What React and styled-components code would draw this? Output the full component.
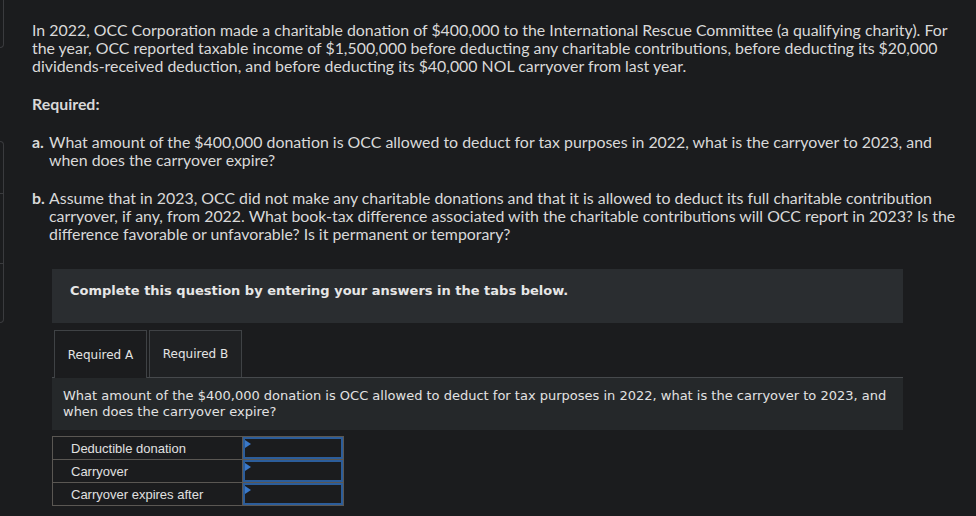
import React from "react";
import styled, { createGlobalStyle } from "styled-components";

const Global = createGlobalStyle`
  html, body { margin: 0; padding: 0; background: #1b1c1e; }
  body { width: 976px; height: 516px; overflow: hidden; }
`;

const Page = styled.div`
  display: flex;
  width: 976px;
  height: 516px;
  background: #1b1c1e;
  color: #d9d9d9;
  font-family: "Lato", "Open Sans", sans-serif;
  overflow: hidden;
`;

const Rail = styled.div`
  width: 4px;
  flex: none;
  display: flex;
  flex-direction: column;
`;

const RailBox = styled.div`
  margin-top: ${(p) => p.$top}px;
  height: ${(p) => p.$h}px;
  border: 1px solid #3a3b3e;
  border-left: none;
  border-radius: 0 ${(p) => (p.$rt ? 4 : 0)}px ${(p) => (p.$rb ? 4 : 0)}px 0;
  box-sizing: border-box;
`;

const Main = styled.div`
  flex: 1;
  padding: 21px 0 0 28px;
`;

const Para = styled.p`
  margin: 0;
  width: 923px;
  font-size: 15.9px;
  line-height: 18px;
`;

const Required = styled.p`
  margin: 20px 0 0;
  font-size: 15.9px;
  font-weight: 700;
  line-height: 18px;
`;

const List = styled.div`
  margin-top: 20px;
  display: flex;
  flex-direction: column;
  gap: 20px;
`;

const Item = styled.div`
  display: flex;
  font-size: 15.9px;
  line-height: 18px;
`;

const Marker = styled.span`
  width: 17px;
  flex: none;
  font-weight: 700;
`;

const ItemText = styled.span`
  width: 910px;
`;

const Panel = styled.div`
  margin: 26px 0 0 20px;
  width: 851px;
`;

const Banner = styled.div`
  height: 54px;
  background: #2a2d30;
  box-sizing: border-box;
  padding: 14px 18px 0;
  font-family: "DejaVu Sans", Verdana, sans-serif;
  font-weight: 700;
  font-size: 13px;
  line-height: 16px;
  color: #e6e6e6;
`;

const Tabs = styled.div`
  margin-top: 7px;
  display: flex;
  gap: 2px;
  padding-left: 2px;
  border-bottom: 1px solid #46494c;
`;

const Tab = styled.div`
  width: 93px;
  box-sizing: border-box;
  border: 1px solid #3f4245;
  border-bottom: none;
  background: ${(p) => (p.$active ? "#1b1c1e" : "#1f2123")};
  display: flex;
  align-items: center;
  justify-content: center;
  font-family: "DejaVu Sans", Verdana, sans-serif;
  font-size: 12px;
  color: #e4e4e4;
  margin-bottom: ${(p) => (p.$active ? "-1px" : "0")};
  height: ${(p) => (p.$active ? "48px" : "47px")};
`;

const Question = styled.div`
  background: #25282a;
  height: 52px;
  box-sizing: border-box;
  padding: 10px 6px 0 11px;
  font-family: "DejaVu Sans", Verdana, sans-serif;
  font-size: 13px;
  line-height: 16px;
  color: #e2e2e2;
`;

const Table = styled.table`
  margin-top: 6px;
  border-collapse: collapse;
  font-family: "Liberation Sans", Arial, sans-serif;
  font-size: 13px;
  color: #e0e0e0;
`;

const Label = styled.td`
  width: 190px;
  height: 22px;
  padding: 0 0 0 18px;
  box-sizing: border-box;
  border: 1px solid #5a5753;
`;

const Cell = styled.td`
  width: 100px;
  padding: 0;
  border: 1px solid #5a5753;
`;

const Input = styled.div`
  position: relative;
  height: 22px;
  box-sizing: border-box;
  border: 2px solid #2c5d9a;
  background: #1b1c1e;
`;

const Flag = styled.span`
  position: absolute;
  left: 0;
  top: 1px;
  width: 0;
  height: 0;
  border-top: 4px solid transparent;
  border-bottom: 4px solid transparent;
  border-left: 6px solid #3a78c8;
`;

const rows = ["Deductible donation", "Carryover", "Carryover expires after"];

export default function App() {
  return (
    <>
      <Global />
      <Page>
        <Rail>
          <RailBox $top={-4} $h={52} $rb />
          <RailBox $top={93} $h={53} $rt />
          <RailBox $top={-1} $h={71} />
          <RailBox $top={-1} $h={60} $rb />
        </Rail>
        <Main>
          <Para>
            In 2022, OCC Corporation made a charitable donation of $400,000 to the International Rescue
            Committee (a qualifying charity). For the year, OCC reported taxable income of $1,500,000
            before deducting any charitable contributions, before deducting its $20,000
            dividends-received deduction, and before deducting its $40,000 NOL carryover from last year.
          </Para>
          <Required>Required:</Required>
          <List>
            <Item>
              <Marker>a.</Marker>
              <ItemText>
                What amount of the $400,000 donation is OCC allowed to deduct for tax purposes in 2022,
                what is the carryover to 2023, and when does the carryover expire?
              </ItemText>
            </Item>
            <Item>
              <Marker>b.</Marker>
              <ItemText>
                Assume that in 2023, OCC did not make any charitable donations and that it is allowed to
                deduct its full charitable contribution carryover, if any, from 2022. What book-tax
                difference associated with the charitable contributions will OCC report in 2023? Is the
                difference favorable or unfavorable? Is it permanent or temporary?
              </ItemText>
            </Item>
          </List>
          <Panel>
            <Banner>Complete this question by entering your answers in the tabs below.</Banner>
            <Tabs>
              <Tab $active>Required A</Tab>
              <Tab>Required B</Tab>
            </Tabs>
            <Question>
              What amount of the $400,000 donation is OCC allowed to deduct for tax purposes in 2022,
              what is the carryover to 2023, and when does the carryover expire?
            </Question>
            <Table>
              <tbody>
                {rows.map((r) => (
                  <tr key={r}>
                    <Label>{r}</Label>
                    <Cell>
                      <Input>
                        <Flag />
                      </Input>
                    </Cell>
                  </tr>
                ))}
              </tbody>
            </Table>
          </Panel>
        </Main>
      </Page>
    </>
  );
}
